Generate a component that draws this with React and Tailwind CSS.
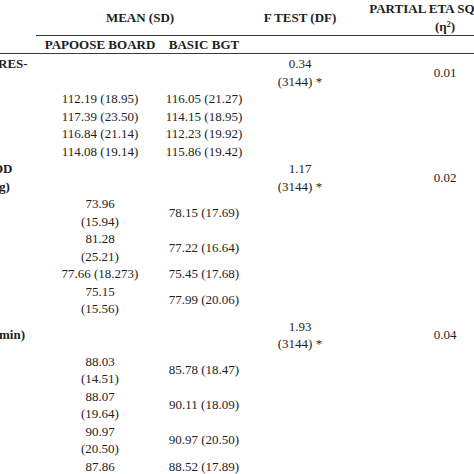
import React from 'react';

const sections = [
  {
    label: [{ text: 'RES-', shift: '-ml-[2px]' }, { text: '', shift: '' }],
    f: ['0.34', '(3144) *'],
    eta: '0.01',
    rows: [
      [['112.19 (18.95)'], '116.05 (21.27)'],
      [['117.39 (23.50)'], '114.15 (18.95)'],
      [['116.84 (21.14)'], '112.23 (19.92)'],
      [['114.08 (19.14)'], '115.86 (19.42)'],
    ],
  },
  {
    label: [{ text: 'OD', shift: '-ml-[7px]' }, { text: 'g)', shift: '-ml-[1px]' }],
    f: ['1.17', '(3144) *'],
    eta: '0.02',
    rows: [
      [['73.96', '(15.94)'], '78.15 (17.69)'],
      [['81.28', '(25.21)'], '77.22 (16.64)'],
      [['77.66 (18.273)'], '75.45 (17.68)'],
      [['75.15', '(15.56)'], '77.99 (20.06)'],
    ],
  },
  {
    label: [{ text: 'min)', shift: '-ml-[1px]' }],
    f: ['1.93', '(3144) *'],
    eta: '0.04',
    rows: [
      [['88.03', '(14.51)'], '85.78 (18.47)'],
      [['88.07', '(19.64)'], '90.11 (18.09)'],
      [['90.97', '(20.50)'], '90.97 (20.50)'],
      [['87.86'], '88.52 (17.89)'],
    ],
  },
];

function Section({ section }) {
  return (
    <div>
      {/* section heading row */}
      <div className="grid grid-cols-[36px_128px_80px_112px_178px]">
        <div className="overflow-hidden flex flex-col justify-center font-bold whitespace-nowrap">
          {section.label.map((l, i) => (
            <div key={i} className={`h-[17.5px] ${l.shift}`}>{l.text}</div>
          ))}
        </div>
        <div />
        <div />
        <div className="text-center">
          {section.f.map((t, i) => (
            <div key={i}>{t}</div>
          ))}
        </div>
        <div className="flex items-center justify-center">{section.eta}</div>
      </div>

      {section.rows.map((row, i) => (
        <div key={i} className="grid grid-cols-[36px_128px_80px_112px_178px]">
          <div />
          <div className="text-center">
            {row[0].map((t, j) => (
              <div key={j}>{t}</div>
            ))}
          </div>
          <div className="flex items-center justify-center whitespace-nowrap">{row[1]}</div>
          <div />
          <div />
        </div>
      ))}
    </div>
  );
}

export default function App() {
  return (
    <div
      className="w-[474px] h-[474px] overflow-hidden bg-white text-[#1e1e1e] text-[13px] leading-[17.5px]"
      style={{ fontFamily: '"Liberation Serif", "Times New Roman", serif' }}
    >
      <div className="w-[534px]">
        {/* header, first line */}
        <div className="flex h-[36px]">
          <div className="w-[36px]" />
          <div className="flex-1 grid grid-cols-[208px_112px_178px] border-b border-[#3c3c3c] font-bold">
            <div className="flex items-center justify-center">MEAN (SD)</div>
            <div className="flex items-center justify-center">F TEST (DF)</div>
            <div className="text-center">
              <div>PARTIAL ETA SQUARED</div>
              <div>
                (η<sup className="text-[8px]">2</sup>)
              </div>
            </div>
          </div>
        </div>

        {/* header, second line */}
        <div className="grid grid-cols-[36px_128px_80px_112px_178px] h-[18px] border-b border-[#3c3c3c] font-bold whitespace-nowrap">
          <div />
          <div className="text-center">PAPOOSE BOARD</div>
          <div className="text-center">BASIC BGT</div>
          <div />
          <div />
        </div>

        <div className="pt-[1px]">
          {sections.map((s, i) => (
            <Section key={i} section={s} />
          ))}
        </div>
      </div>
    </div>
  );
}
